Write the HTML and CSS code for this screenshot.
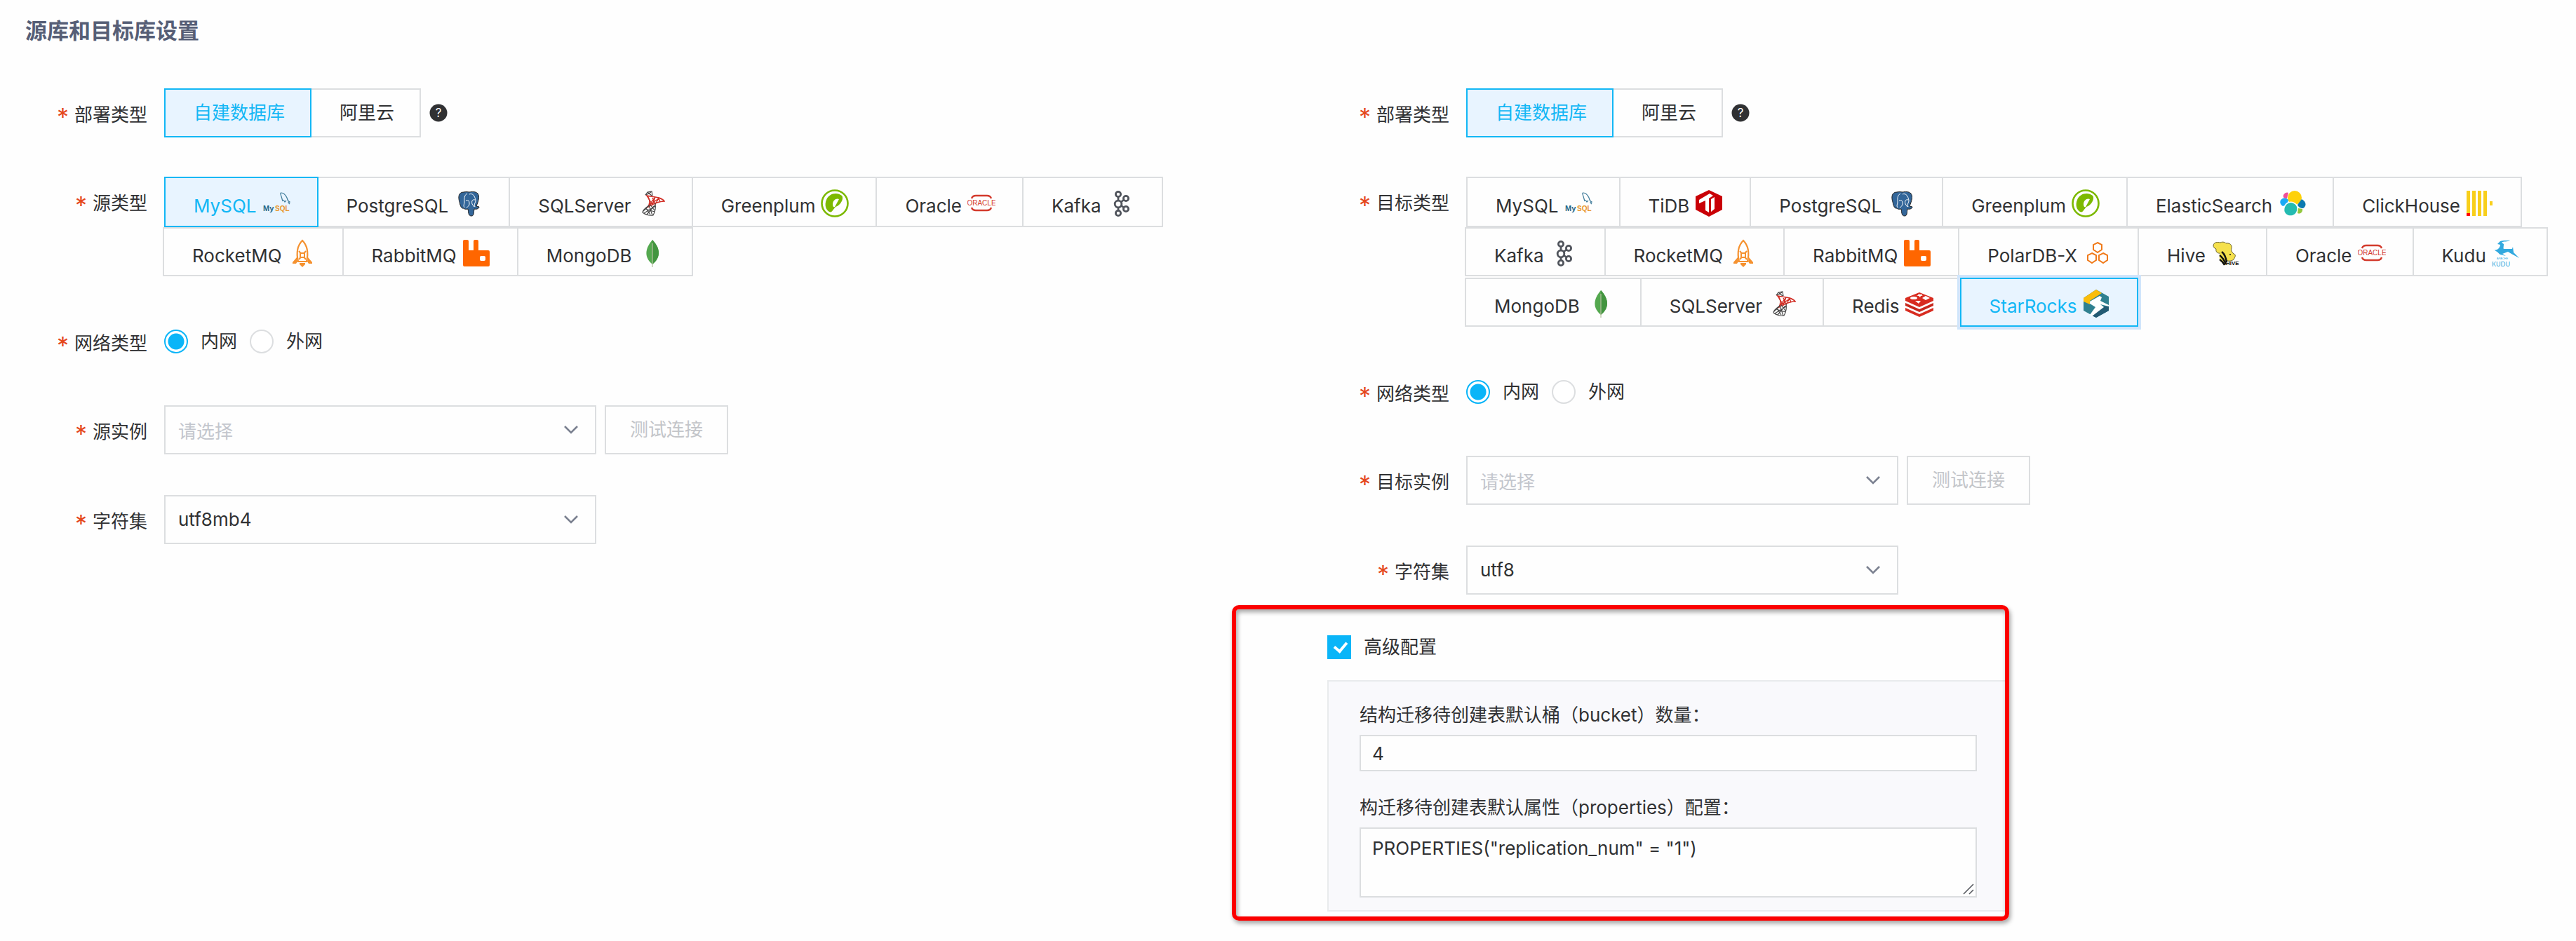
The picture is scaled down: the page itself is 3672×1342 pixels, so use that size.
FILE: index.html
```html
<!DOCTYPE html>
<html lang="zh-CN">
<head>
  <meta charset="UTF-8">
  <title>源库和目标库设置</title>
  <link rel="stylesheet" href="styles.css">
</head>
<body>

  <!-- logo sprite -->
  <svg class="sprite" xmlns="http://www.w3.org/2000/svg">
    <symbol id="i-mysql" viewBox="0 0 40 40">
      <text x="1" y="31" class="logo-my">My</text>
      <text x="18" y="31" class="logo-sql">SQL</text>
      <path d="M29 17c-1-3-1-4-2-7s-2-5 0-5c4 0 6 3 8 7 1 3 1 5 4 6l-2 1 2 2M30 15l2 3 2-2" fill="none" stroke="#3d7a99" stroke-width="1.2"/>
    </symbol>
    <symbol id="i-pg" viewBox="0 0 40 40">
      <path d="M14 4c4-1 7 0 8 0 4-1 9-1 12 2 3 4 1 11-2 18l4 1c0 2-3 4-7 3-1 5 0 10-4 10-5 0-4-6-5-10-4 1-5 0-6-1-3 1-5-3-6-9C6 12 6 4 14 4z" fill="#336699" stroke="#222" stroke-width="1"/>
      <path d="M19 6c-5 3-4 8-4 12 0 3-2 5 0 8M17 16c4-1 5 0 5 5 0 2-2 4-4 5M22 7c5-2 8 3 9 9 0 3-3 5-1 9M30 15c-4-1-5 2-4 6l3 4" fill="none" stroke="#fff" stroke-width="1"/>
    </symbol>
    <symbol id="i-sqlserver" viewBox="0 0 40 40">
      <path d="M14 9c7 2 20 1 25 8-7 0-13 2-23 8 3-6 3-11-2-16z" fill="#fff" stroke="#d12f26" stroke-width="1.6"/>
      <path d="M14 9l8 13 4-11-9 12 14-10-5 8-4-9M31 13l2 5" fill="none" stroke="#d12f26" stroke-width="1.4"/>
      <path d="M12 8l3-4 6-1 1 6M13 8l7-4M15 4l6 5M17 23c-4 3-9 6-9 10 4 3 9 5 15 4 3-5 4-10 3-17M8 32l9-9 5 14M10 34l16-10M12 28l13 4M14 36l11-13M19 22l6 8M13 27l6 9" fill="none" stroke="#474747" stroke-width="1.2"/>
    </symbol>
    <symbol id="i-greenplum" viewBox="0 0 40 40">
      <circle cx="20" cy="20" r="18.5" fill="none" stroke="#7cb900" stroke-width="2.6"/>
      <path d="M30 9C23 3 11 6 8 15c-3 7-1 14 4 17 2 1 4 0 5-2l4-5c5-1 10-8 10-12 0-2 0-3-1-4z" fill="#7cb900"/>
      <path d="M26 14c-4-2-9 2-9 7 0 3 1 5 3 4z" fill="#fefefe"/>
    </symbol>
    <symbol id="i-oracle" viewBox="0 0 40 40">
      <path d="M6 13c1-3 3-4 6-4h16c3 0 5 1 6 4M6 26c1 3 3 4 6 4h16c3 0 5-1 6-4" fill="none" stroke="#d33a2c" stroke-width="2.4"/>
      <text x="20" y="23" class="logo-oracle">ORACLE</text>
    </symbol>
    <symbol id="i-kafka" viewBox="0 0 40 40">
      <g fill="none" stroke="#50545c" stroke-width="2.8">
        <path d="M16 11v5M16 26v4M20 18l4-3M20 23l4 3"/>
        <circle cx="16" cy="7" r="3.6"/><circle cx="16" cy="21" r="4.8"/><circle cx="16" cy="34" r="3.6"/>
        <circle cx="27" cy="13" r="3.6"/><circle cx="27" cy="28" r="3.6"/>
      </g>
    </symbol>
    <symbol id="i-rocketmq" viewBox="0 0 40 40">
      <path d="M21 2c7 7 9 17 6 30H15C12 19 14 9 21 2z" fill="none" stroke="#f5912f" stroke-width="2.2"/>
      <path d="M13 26l-6 7v2h5l2-3zM29 26l6 7v2h-5l-2-3zM17 34h8v2l-4 4-4-4z" fill="#f5912f"/>
      <path d="M16 17l10 12M26 17L16 29" stroke="#f5912f" stroke-width="2"/>
      <rect x="18" y="20" width="6" height="6" fill="#fff" stroke="#f5912f" stroke-width="2"/>
    </symbol>
    <symbol id="i-rabbitmq" viewBox="0 0 40 40">
      <path fill-rule="evenodd" d="M3 1h4q2 0 2 2v13h7V3q0-2 2-2h3q2 0 2 2v13h14q2 0 2 2v19q0 2-2 2H3q-2 0-2-2V3q0-2 2-2zM25 26v3q0 2 2 2h4q2 0 2-2v-3q0-2-2-2h-4q-2 0-2 2z" fill="#ff6600"/>
    </symbol>
    <symbol id="i-mongodb" viewBox="0 0 40 40">
      <path d="M22 1c12 13 12 25 0 35C10 26 11 14 22 1z" fill="#54a84f"/>
      <path d="M22 1c12 13 12 25 0 35z" fill="#439540"/>
      <path d="M22 6v34" stroke="#b5bf9f" stroke-width="1.2"/>
    </symbol>
    <symbol id="i-tidb" viewBox="0 0 40 40">
      <path d="M20 1l19 9v19l-19 10L1 29V10z" fill="#c90006"/>
      <path d="M6 15l15-9 5 3-6 4v20l-5-3V16l-9 4zM23 14l5-3v17l-5 4z" fill="#fff"/>
    </symbol>
    <symbol id="i-elastic" viewBox="0 0 40 40">
      <ellipse cx="24" cy="12" rx="10" ry="10" fill="#fed10a"/>
      <path d="M8 8c2-4 6-4 7-3l-2 8c-4 0-6-1-5-5z" fill="#f04e98"/>
      <path d="M7 13c3-1 6 0 8 2-1 5-4 8-8 9-5-3-5-9 0-11z" fill="#1ba9f5"/>
      <path d="M15 19c5-2 12 1 13 7 1 7-4 12-10 12S7 33 9 26c1-3 3-6 6-7z" fill="#24bbb1" stroke="#fefefe" stroke-width="1.5"/>
      <path d="M34 14c7 4 7 10 2 13-4 0-7-2-8-5z" fill="#0b7ab0"/>
      <path d="M29 27l6 1c1 4-3 8-7 6z" fill="#93c83e"/>
    </symbol>
    <symbol id="i-clickhouse" viewBox="0 0 40 40">
      <path d="M1 2h5v32H1zM9 2h5v36H9zM17 2h5v36h-5zM25 2h5v36h-5zM34 17h4v6h-4z" fill="#f8cf1c"/>
      <path d="M1 34h5v4H1z" fill="#f00"/>
    </symbol>
    <symbol id="i-polardb" viewBox="0 0 40 40">
      <path d="M21 5l6 3v7l-6 4-6-4V8zM13 20l6 3v7l-6 4-6-4v-7zM29 20l6 3v7l-6 4-6-4v-7z" fill="none" stroke="#f07a1a" stroke-width="2"/>
    </symbol>
    <symbol id="i-hive" viewBox="0 0 40 40">
      <path d="M3 9c1-5 6-5 10-4 4-2 7 0 8 1 6-1 9 3 8 7-1 3 0 5 3 8 4 1 2 5 0 8-4 3-9 3-12 0-2-3-2-6-6-9-5 1-8-2-7-6-3-1-4-3-4-5z" fill="#f5e04c" stroke="#6b6535" stroke-width="1"/>
      <path d="M13 19c5 3 8 9 9 18-7-1-13-8-9-18z" fill="#f5e04c"/>
      <path d="M15 18c4 3 6 8 7 15M12 23c4 3 7 8 9 13M12 29c3 2 5 4 7 8" fill="none" stroke="#111" stroke-width="2.4"/>
      <circle cx="27" cy="22" r="1" fill="#111"/>
      <text x="21" y="37" class="logo-hive">HIVE</text>
    </symbol>
    <symbol id="i-kudu" viewBox="0 0 40 40">
      <path d="M2 15c2 1 4 1 7-1 2-2 3-4 3-6l-4-1 4-4c5-2 10 0 14-2-4 4-9 1-12 4l3 2c0 4-1 6 0 7l12 0 1-3 1 8 8 8-11-6-5-3-8 3 5 3-8-2c-3-2-3-4-10-7z" fill="#32a9df"/>
      <text x="7" y="29" class="logo-apache">APACHE</text>
      <text x="0" y="39" class="logo-kudu">KUDU</text>
    </symbol>
    <symbol id="i-redis" viewBox="0 0 40 40">
      <path d="M0 26l20 9 20-9v4l-20 9-20-9z" fill="#d82c20"/>
      <path d="M0 19l20 9 20-9v4l-20 9-20-9z" fill="#c6271c"/>
      <path d="M0 12l20-8 20 8v4l-20 9-20-9z" fill="#d82c20"/>
      <path d="M19 6l2 1 3-1-1 2 2 1-3 0-1 2-2-2-3 0 2-1zM29 9l6 3-6 3-5-3zM14 16l8 0-3 4z" fill="#fff"/>
      <ellipse cx="12" cy="12" rx="5" ry="2" fill="#fff"/>
    </symbol>
    <symbol id="i-starrocks" viewBox="0 0 40 40">
      <path d="M20 0l18 10v20L20 40 2 30V12z" fill="#2f8090"/>
      <path d="M38 24v6L20 40l-8-4 19-12z" fill="#235a73"/>
      <path d="M2 12L20 0l8 5-17 11v5l-9-4z" fill="#fabd0b"/>
      <path d="M25 9L11 17v3l8 5-8 11 3 2 17-13-5-4 12 3v-2l-12-6 2-5z" fill="#fff"/>
    </symbol>
    <symbol id="i-help" viewBox="0 0 26 26">
      <circle cx="13" cy="13" r="12.5" fill="#303133"/>
      <text x="13" y="19" class="help-mark">?</text>
    </symbol>
    <symbol id="i-arrow" viewBox="0 0 20 12">
      <path d="M1 1l9 9 9-9" fill="none" stroke="#7b8190" stroke-width="2.6"/>
    </symbol>
  </svg>

  <h1 class="page-title">源库和目标库设置</h1>

  <div class="columns">
    <form class="form">
      <div class="form-row">
        <span class="label">部署类型</span>
        <div class="group">
          <button type="button" class="option active">自建数据库</button>
          <button type="button" class="option">阿里云</button>
          <svg class="help"><use href="#i-help"/></svg>
        </div>
      </div>
      <div class="form-row">
        <span class="label">源类型</span>
        <div class="types">
          <div class="group">
            <button type="button" class="option type active"><span>MySQL</span><svg><use href="#i-mysql"/></svg></button>
            <button type="button" class="option type"><span>PostgreSQL</span><svg><use href="#i-pg"/></svg></button>
            <button type="button" class="option type"><span>SQLServer</span><svg><use href="#i-sqlserver"/></svg></button>
            <button type="button" class="option type"><span>Greenplum</span><svg><use href="#i-greenplum"/></svg></button>
            <button type="button" class="option type"><span>Oracle</span><svg><use href="#i-oracle"/></svg></button>
            <button type="button" class="option type"><span>Kafka</span><svg><use href="#i-kafka"/></svg></button>
          </div>
          <div class="group">
            <button type="button" class="option type"><span>RocketMQ</span><svg><use href="#i-rocketmq"/></svg></button>
            <button type="button" class="option type"><span>RabbitMQ</span><svg><use href="#i-rabbitmq"/></svg></button>
            <button type="button" class="option type"><span>MongoDB</span><svg><use href="#i-mongodb"/></svg></button>
          </div>
        </div>
      </div>
      <div class="form-row">
        <span class="label">网络类型</span>
        <div class="radios">
          <label><input type="radio" name="source-net" checked>内网</label>
          <label><input type="radio" name="source-net">外网</label>
        </div>
      </div>
      <div class="form-row select-row">
        <label class="label" for="source-instance">源实例</label>
        <div class="select">
          <select id="source-instance" class="empty"><option>请选择</option></select>
          <svg class="arrow"><use href="#i-arrow"/></svg>
        </div>
        <button type="button" class="test" disabled>测试连接</button>
      </div>
      <div class="form-row select-row">
        <label class="label" for="source-charset">字符集</label>
        <div class="select">
          <select id="source-charset"><option>utf8mb4</option></select>
          <svg class="arrow"><use href="#i-arrow"/></svg>
        </div>
      </div>
    </form>

    <form class="form">
      <div class="form-row">
        <span class="label">部署类型</span>
        <div class="group">
          <button type="button" class="option active">自建数据库</button>
          <button type="button" class="option">阿里云</button>
          <svg class="help"><use href="#i-help"/></svg>
        </div>
      </div>
      <div class="form-row">
        <span class="label">目标类型</span>
        <div class="types">
          <div class="group">
            <button type="button" class="option type"><span>MySQL</span><svg><use href="#i-mysql"/></svg></button>
            <button type="button" class="option type"><span>TiDB</span><svg><use href="#i-tidb"/></svg></button>
            <button type="button" class="option type"><span>PostgreSQL</span><svg><use href="#i-pg"/></svg></button>
            <button type="button" class="option type"><span>Greenplum</span><svg><use href="#i-greenplum"/></svg></button>
            <button type="button" class="option type"><span>ElasticSearch</span><svg><use href="#i-elastic"/></svg></button>
            <button type="button" class="option type"><span>ClickHouse</span><svg><use href="#i-clickhouse"/></svg></button>
          </div>
          <div class="group">
            <button type="button" class="option type"><span>Kafka</span><svg><use href="#i-kafka"/></svg></button>
            <button type="button" class="option type"><span>RocketMQ</span><svg><use href="#i-rocketmq"/></svg></button>
            <button type="button" class="option type"><span>RabbitMQ</span><svg><use href="#i-rabbitmq"/></svg></button>
            <button type="button" class="option type"><span>PolarDB-X</span><svg><use href="#i-polardb"/></svg></button>
            <button type="button" class="option type"><span>Hive</span><svg><use href="#i-hive"/></svg></button>
            <button type="button" class="option type"><span>Oracle</span><svg><use href="#i-oracle"/></svg></button>
            <button type="button" class="option type"><span>Kudu</span><svg><use href="#i-kudu"/></svg></button>
          </div>
          <div class="group">
            <button type="button" class="option type"><span>MongoDB</span><svg><use href="#i-mongodb"/></svg></button>
            <button type="button" class="option type"><span>SQLServer</span><svg><use href="#i-sqlserver"/></svg></button>
            <button type="button" class="option type"><span>Redis</span><svg><use href="#i-redis"/></svg></button>
            <button type="button" class="option type active focused"><span>StarRocks</span><svg><use href="#i-starrocks"/></svg></button>
          </div>
        </div>
      </div>
      <div class="form-row">
        <span class="label">网络类型</span>
        <div class="radios">
          <label><input type="radio" name="target-net" checked>内网</label>
          <label><input type="radio" name="target-net">外网</label>
        </div>
      </div>
      <div class="form-row select-row">
        <label class="label" for="target-instance">目标实例</label>
        <div class="select">
          <select id="target-instance" class="empty"><option>请选择</option></select>
          <svg class="arrow"><use href="#i-arrow"/></svg>
        </div>
        <button type="button" class="test" disabled>测试连接</button>
      </div>
      <div class="form-row select-row">
        <label class="label" for="target-charset">字符集</label>
        <div class="select">
          <select id="target-charset"><option>utf8</option></select>
          <svg class="arrow"><use href="#i-arrow"/></svg>
        </div>
      </div>

      <div class="advanced">
        <label class="check"><input type="checkbox" checked>高级配置</label>
        <div class="panel">
          <label for="bucket">结构迁移待创建表默认桶（bucket）数量：</label>
          <input type="text" id="bucket" value="4">
          <label for="properties">构迁移待创建表默认属性（properties）配置：</label>
          <div class="area">
            <textarea id="properties">PROPERTIES("replication_num" = "1")</textarea>
            <svg class="grip" viewBox="0 0 16 16"><path d="M1 15L15 1M9 15l6-6" stroke="#55585e" stroke-width="1.5"/></svg>
          </div>
        </div>
      </div>
    </form>
  </div>

</body>
</html>
```

FILE: styles.css
```css
* {
  box-sizing: border-box;
}

body {
  margin: 0;
  padding-bottom: 42px;
  background: #fefefe;
  color: #303133;
  font-family: Inter, "Noto Sans CJK SC", sans-serif;
  font-size: 26px;
  line-height: 40px;
}

button,
input,
select,
textarea {
  margin: 0;
  font: inherit;
  color: inherit;
}

.sprite {
  display: none;
}

.page-title {
  margin: 0;
  padding: 20px 36px 58px;
  color: #565e76;
  font-size: 31px;
  font-weight: 600;
  line-height: 48px;
}

.columns {
  display: grid;
  grid-template-columns: 1fr 1fr;
  gap: 40px;
}

.form {
  display: flex;
  flex-direction: column;
  gap: 56px;
}

.form-row {
  display: flex;
  align-items: flex-start;
}

.select-row {
  padding-bottom: 2px;
}

.label {
  flex: none;
  width: 210px;
  height: 70px;
  margin-right: 24px;
  padding-top: 4px;
  line-height: 68px;
  text-align: right;
}

.label::before {
  content: "*";
  margin-right: 8px;
  color: #e5481d;
  font-size: 34px;
  line-height: 0;
  vertical-align: -6px;
}

/* option buttons */
.group {
  display: flex;
  align-items: center;
}

.option {
  height: 70px;
  padding: 0 36px 0 40px;
  background: #fefefe;
  border: 2px solid #dcdee0;
  white-space: nowrap;
}

.option + .option {
  margin-left: -2px;
}

.option.active {
  position: relative;
  background: #e8f4ff;
  border-color: #12b7f5;
  color: #12b7f5;
}

.option.focused {
  box-shadow: 0 0 0 4px #d0e5fb;
}

.type {
  display: flex;
  align-items: center;
  gap: 8px;
  padding: 4px 38px 0 40px;
}

.type span {
  padding-top: 8px;
}

.type svg {
  width: 40px;
  height: 40px;
}

.types .group:first-child .option {
  height: 72px;
}

.types .group + .group {
  margin-left: -2px;
  padding-bottom: 2px;
}

.help {
  width: 26px;
  height: 26px;
  margin-left: 12px;
}

/* radios */
.radios {
  display: flex;
  align-items: center;
  gap: 18px;
  height: 70px;
}

.radios label,
.check {
  display: flex;
  align-items: center;
  gap: 18px;
}

.radios input {
  appearance: none;
  width: 34px;
  height: 34px;
  border: 2px solid #dcdee0;
  border-radius: 50%;
  background: #fff;
}

.radios input:checked {
  border-color: #0ab5f8;
  background: radial-gradient(circle, #0ab5f8 11px, #fff 12px);
}

/* selects */
.select {
  position: relative;
  width: 616px;
}

.select select {
  display: block;
  appearance: none;
  width: 100%;
  height: 70px;
  padding: 0 18px;
  background: #fefefe;
  border: 2px solid #dcdee0;
  border-radius: 0;
}

.select .empty {
  padding-top: 6px;
  color: #c3c6cd;
}

.arrow {
  position: absolute;
  top: 29px;
  right: 26px;
  width: 20px;
  height: 12px;
  pointer-events: none;
}

.test {
  width: 176px;
  height: 70px;
  margin-left: 12px;
  padding: 0;
  background: #fefefe;
  border: 2px solid #dcdee0;
  color: #c3c5c9;
}

/* advanced settings */
.advanced {
  position: relative;
  width: 972px;
  margin-left: 36px;
}

.advanced::after {
  content: "";
  position: absolute;
  top: -43px;
  right: 0;
  bottom: -13px;
  left: -136px;
  border: 6px solid #fb0000;
  border-radius: 10px;
  box-shadow: 2px 4px 6px rgba(0, 0, 0, 0.35), inset 2px 4px 6px rgba(0, 0, 0, 0.35);
  pointer-events: none;
}

.check {
  height: 34px;
}

.check input {
  appearance: none;
  width: 34px;
  height: 34px;
  background: #0ab5f8;
}

.check input:checked::after {
  content: "";
  display: block;
  width: 8px;
  height: 14px;
  margin: 6px 0 0 13px;
  border: solid #fff;
  border-width: 0 4px 4px 0;
  transform: rotate(40deg);
}

.panel {
  display: flex;
  flex-direction: column;
  margin-top: 30px;
  padding: 28px 44px 18px;
  background: #f9f9fc;
  border: 2px solid #e9ebed;
}

.panel label {
  margin-bottom: 8px;
}

.panel input,
.panel textarea {
  display: block;
  width: 100%;
  padding: 0 16px;
  background: #fefefe;
  border: 2px solid #dcdee0;
  border-radius: 0;
}

.panel input {
  height: 52px;
  margin-bottom: 32px;
}

.panel textarea {
  height: 100px;
  padding-top: 8px;
  resize: none;
}

.area {
  position: relative;
}

.grip {
  position: absolute;
  right: 4px;
  bottom: 4px;
  width: 16px;
  height: 16px;
}

/* lettering inside the logos */
.logo-my,
.logo-sql {
  font: bold 11px "Liberation Sans", sans-serif;
  fill: #1b6588;
}

.logo-sql {
  fill: #e8942a;
  font-size: 10px;
}

.logo-oracle {
  font: 10px "Liberation Sans", sans-serif;
  fill: #d33a2c;
  text-anchor: middle;
}

.logo-hive {
  font: bold 8px "Liberation Sans", sans-serif;
  fill: #111;
}

.logo-apache {
  font: 4px "Liberation Sans", sans-serif;
  fill: #32a9df;
}

.logo-kudu {
  font: 9px Lato, sans-serif;
  fill: #32a9df;
}

.help-mark {
  font: 17px Inter, sans-serif;
  fill: #fff;
  text-anchor: middle;
}
```
